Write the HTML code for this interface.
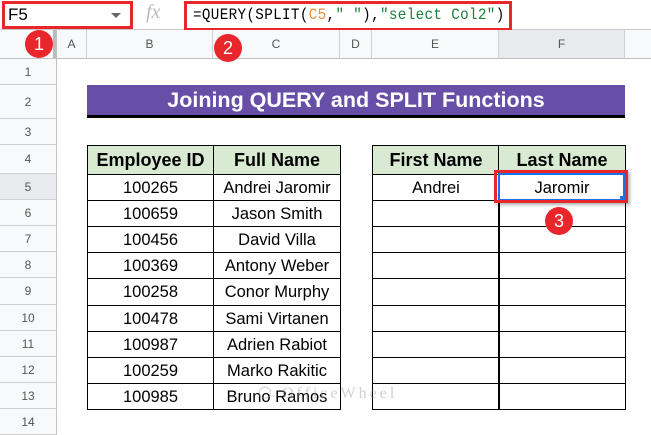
<!DOCTYPE html><html><head><style>
body{margin:0;width:651px;height:431px;overflow:hidden;background:#fff;font-family:"Liberation Sans",Arial,sans-serif;position:relative}
div{position:absolute;box-sizing:border-box}
.rh{left:0;width:57px;background:#f8f9fa;border-right:1px solid #c0c0c0;border-bottom:1px solid #d0d0d0;color:#555;font-size:12px;text-align:center}
.ch{top:30px;height:29px;background:#f8f9fa;border-right:1px solid #d0d0d0;border-bottom:1px solid #c0c0c0;color:#555;font-size:12px;text-align:center;line-height:29px}
.c{border:1px solid #000;font-size:16.5px;text-align:center;color:#000;white-space:nowrap}
.h{background:#d9ead3;font-weight:bold;font-size:18px}
.circ{width:28px;height:28px;border-radius:50%;background:#e8262b;color:#fff;font-size:18px;text-align:center;line-height:28px}
</style></head><body>
<div style="left:0;top:0;width:651px;height:30px;border-bottom:1px solid #c8c8c8"></div>
<div style="left:8px;top:5px;font-size:17px;color:#000">F5</div>
<div style="left:111px;top:13px;width:0;height:0;border-left:5px solid transparent;border-right:5px solid transparent;border-top:5px solid #666"></div>
<div style="left:2px;top:1px;width:131px;height:28px;border:3px solid #e8262b"></div>
<div style="left:146px;top:1px;font-family:'Liberation Serif',serif;font-style:italic;font-size:20px;color:#bbb">fx</div>
<div style="left:184px;top:1px;width:328px;height:30px;border:3px solid #e8262b"></div>
<div style="left:193px;top:6px;font-family:'Liberation Mono',monospace;font-size:16px;letter-spacing:0.4px;white-space:pre;color:#000;transform:scaleX(0.89);transform-origin:left">=QUERY(SPLIT(<span style="color:#e69138">C5</span>,<span style="color:#188038">" "</span>),<span style="color:#188038">"select Col2"</span>)</div>
<div class="ch" style="left:0;width:57px;border-right:4px solid #bbb"></div>
<div class="ch" style="left:57px;width:30px">A</div>
<div class="ch" style="left:87px;width:126px">B</div>
<div class="ch" style="left:213px;width:127px">C</div>
<div class="ch" style="left:340px;width:32px">D</div>
<div class="ch" style="left:372px;width:127px">E</div>
<div class="ch" style="left:499px;width:126px;background:#e8eaed">F</div>
<div class="ch" style="left:625px;width:30px"></div>
<div class="rh" style="top:59px;height:26px;line-height:26px">1</div>
<div class="rh" style="top:85px;height:34px;line-height:34px">2</div>
<div class="rh" style="top:119px;height:26px;line-height:26px">3</div>
<div class="rh" style="top:145px;height:29px;line-height:29px">4</div>
<div class="rh" style="top:174px;height:26px;line-height:26px;background:#e8eaed">5</div>
<div class="rh" style="top:200px;height:26px;line-height:26px">6</div>
<div class="rh" style="top:226px;height:26px;line-height:26px">7</div>
<div class="rh" style="top:252px;height:26px;line-height:26px">8</div>
<div class="rh" style="top:278px;height:27px;line-height:27px">9</div>
<div class="rh" style="top:305px;height:26px;line-height:26px">10</div>
<div class="rh" style="top:331px;height:26px;line-height:26px">11</div>
<div class="rh" style="top:357px;height:26px;line-height:26px">12</div>
<div class="rh" style="top:383px;height:26px;line-height:26px">13</div>
<div class="rh" style="top:409px;height:26px;line-height:26px">14</div>
<div style="left:87px;top:85px;width:538px;height:33px;background:#674ea7;border-bottom:3px solid #000;color:#fff;font-weight:bold;font-size:21.5px;text-align:center;line-height:31px">Joining QUERY and SPLIT Functions</div>
<div id="t"></div>
<script>
var ids=[["100265","Andrei Jaromir"],["100659","Jason Smith"],["100456","David Villa"],["100369","Antony Weber"],["100258","Conor Murphy"],["100478","Sami Virtanen"],["100987","Adrien Rabiot"],["100259","Marko Rakitic"],["100985","Bruno Ramos"]];
var tops=[174,200,226,252,278,305,331,357,383,409];
var h='';
function cell(x,y,w,hh,t,cls){return '<div class="c '+cls+'" style="left:'+x+'px;top:'+y+'px;width:'+(w+1)+'px;height:'+(hh+1)+'px;line-height:'+hh+'px">'+t+'</div>';}
h+=cell(87,145,126,29,'Employee ID','h')+cell(213,145,127,29,'Full Name','h')+cell(372,145,127,29,'First Name','h')+cell(498,145,127,29,'Last Name','h');
for(var i=0;i<9;i++){var y=tops[i],hh=tops[i+1]-y;h+=cell(87,y,126,hh,ids[i][0],'')+cell(213,y,127,hh,ids[i][1],'')+cell(372,y,127,hh,i==0?'Andrei':'','')+cell(498,y,127,hh,i==0?'Jaromir':'','');}
document.getElementById('t').outerHTML=h;
</script>
<div style="left:498px;top:173px;width:127px;height:28px;border:2px solid #1a73e8"></div>
<div style="left:620px;top:196px;width:6px;height:6px;background:#1a73e8"></div>
<div style="left:494px;top:170px;width:134px;height:33px;border:3px solid #e8262b;box-shadow:2px 2px 3px rgba(0,0,0,.3)"></div>
<div style="left:258px;top:383px;font-size:16px;letter-spacing:3px;color:rgba(150,150,150,.45);font-family:'Liberation Serif',serif">⬡ OfficeWheel</div>
<div class="circ" style="left:25px;top:30px">1</div>
<div class="circ" style="left:214px;top:34px">2</div>
<div class="circ" style="left:545px;top:207px">3</div>
</body></html>
